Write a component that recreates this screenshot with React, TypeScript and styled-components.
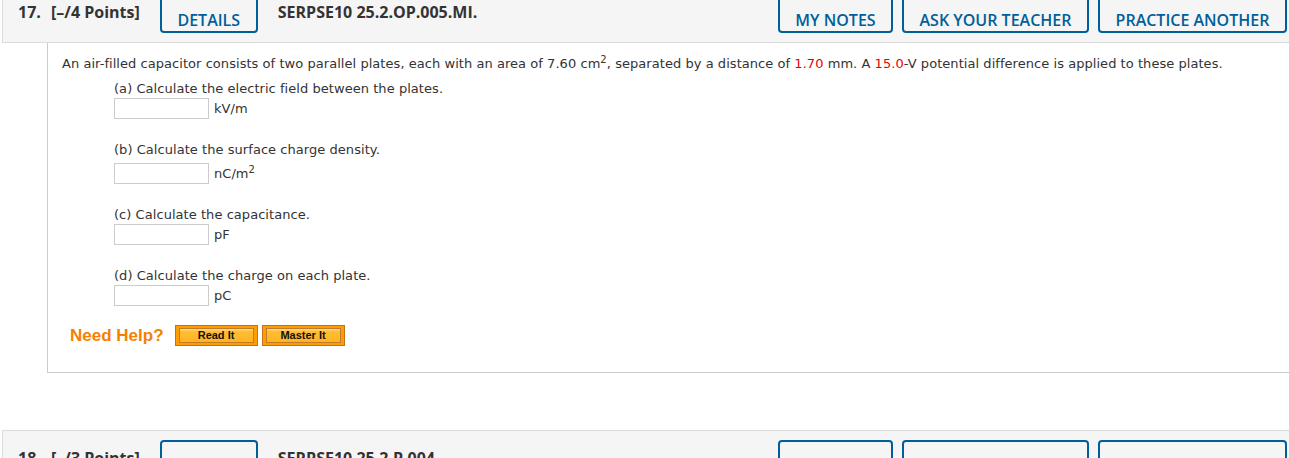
import React from "react";
import styled, { createGlobalStyle } from "styled-components";

const Global = createGlobalStyle`
  html, body {
    margin: 0;
    padding: 0;
    background: #ffffff;
    overflow: hidden;
  }
  body {
    font-family: "DejaVu Sans", Verdana, sans-serif;
  }
`;

const Page = styled.div`
  margin-top: -16px;
  padding-left: 2px;
  width: 1320px;
`;

const Question = styled.section`
  display: flex;
  flex-direction: column;
  & + & {
    margin-top: 57px;
  }
`;

const Header = styled.header`
  display: flex;
  align-items: flex-start;
  background: #f5f5f5;
  border: 1px solid #dcdcdc;
  border-right: none;
  padding: 9px 3px 9px 15px;
  width: 1269px;
  font-family: "Open Sans", "Liberation Sans", sans-serif;
`;

const HeaderText = styled.span`
  margin-top: 7px;
  font-size: 16px;
  line-height: 22px;
  font-weight: 700;
  color: #333333;
  white-space: nowrap;
`;

const Number = styled(HeaderText)`
  width: 33px;
`;

const Points = styled(HeaderText)`
  margin-right: 20px;
`;

const Code = styled(HeaderText)`
  margin-left: 20px;
`;

const Actions = styled.div`
  display: flex;
  gap: 9px;
  margin-left: auto;
`;

const TabButton = styled.button<{ $w: number }>`
  box-sizing: border-box;
  width: ${(p) => p.$w}px;
  height: 39px;
  padding: 12px 0 0;
  border: 2px solid #005f9b;
  border-radius: 4px;
  background: transparent;
  font-family: "Open Sans", "Liberation Sans", sans-serif;
  font-size: 16px;
  line-height: 22px;
  font-weight: 600;
  color: #005f9b;
  text-align: center;
  text-transform: uppercase;
  white-space: nowrap;
  cursor: pointer;
`;

const Body = styled.div`
  margin-left: 45px;
  border-left: 1px solid #cccccc;
  border-bottom: 1px solid #cccccc;
  padding: 13px 0 26px 14px;
  color: #333333;
  font-size: 13px;
  line-height: 16px;
  letter-spacing: 0.05px;
  display: flex;
  flex-direction: column;
`;

const Prompt = styled.p`
  margin: 0;
  white-space: nowrap;
`;

const Red = styled.span`
  color: #ee0000;
`;

const Sup = styled.sup`
  font-size: 10px;
  line-height: 0;
  vertical-align: 5px;
`;

const Parts = styled.div`
  display: flex;
  flex-direction: column;
  gap: 23px;
  margin: 9px 0 0 52px;
`;

const Part = styled.div`
  display: flex;
  flex-direction: column;
`;

const Label = styled.div`
  line-height: 16px;
`;

const AnswerRow = styled.div<{ $tall?: boolean }>`
  display: flex;
  align-items: center;
  gap: 5px;
  margin-top: ${(p) => (p.$tall ? "5px" : "1px")};
`;

const AnswerBox = styled.input`
  box-sizing: border-box;
  width: 95px;
  height: 21px;
  margin: 0;
  border: 1px solid #cccccc;
  background: #ffffff;
  padding: 0 3px;
  font: inherit;
`;

const Unit = styled.span`
  line-height: 16px;
`;

const HelpRow = styled.div`
  display: flex;
  align-items: center;
  margin: 19px 0 0 8px;
`;

const HelpTitle = styled.span`
  font-family: "Liberation Sans", Arial, sans-serif;
  font-weight: 700;
  font-size: 17px;
  letter-spacing: 0;
  color: #f77f00;
  margin-right: 11px;
`;

const HelpButton = styled.button`
  box-sizing: border-box;
  width: 83px;
  height: 21px;
  padding: 2px 3px;
  margin: 0 4px 0 0;
  border: 1px solid #c0731c;
  background: #ff9c00;
  cursor: pointer;
`;

const HelpFace = styled.span`
  display: block;
  box-sizing: border-box;
  height: 15px;
  border: 1px solid #c67a25;
  background: linear-gradient(#ffdc94 0, #ffbd33 20%, #ffb422 100%);
  font-family: "Liberation Sans", Arial, sans-serif;
  font-weight: 700;
  font-size: 11px;
  line-height: 13px;
  letter-spacing: 0;
  color: #111111;
  text-align: center;
`;

type Q = {
  n: string;
  points: string;
  code: string;
};

const QuestionHeader: React.FC<Q> = ({ n, points, code }) => (
  <Header>
    <Number>{n}</Number>
    <Points>{points}</Points>
    <TabButton $w={98}>Details</TabButton>
    <Code>{code}</Code>
    <Actions>
      <TabButton $w={115}>My Notes</TabButton>
      <TabButton $w={187}>Ask Your Teacher</TabButton>
      <TabButton $w={189}>Practice Another</TabButton>
    </Actions>
  </Header>
);

const parts: { label: string; unit: React.ReactNode; tall?: boolean }[] = [
  { label: "(a) Calculate the electric field between the plates.", unit: "kV/m" },
  {
    label: "(b) Calculate the surface charge density.",
    unit: (
      <>
        nC/m<Sup>2</Sup>
      </>
    ),
    tall: true,
  },
  { label: "(c) Calculate the capacitance.", unit: "pF" },
  { label: "(d) Calculate the charge on each plate.", unit: "pC" },
];

export default function App() {
  return (
    <>
      <Global />
      <Page>
        <Question>
          <QuestionHeader n="17." points="[–/4 Points]" code="SERPSE10 25.2.OP.005.MI." />
          <Body>
            <Prompt>
              An air-filled capacitor consists of two parallel plates, each with an area of 7.60 cm
              <Sup>2</Sup>, separated by a distance of <Red>1.70</Red> mm. A <Red>15.0</Red>-V
              potential difference is applied to these plates.
            </Prompt>
            <Parts>
              {parts.map((p) => (
                <Part key={p.label}>
                  <Label>{p.label}</Label>
                  <AnswerRow $tall={p.tall}>
                    <AnswerBox type="text" />
                    <Unit>{p.unit}</Unit>
                  </AnswerRow>
                </Part>
              ))}
            </Parts>
            <HelpRow>
              <HelpTitle>Need Help?</HelpTitle>
              <HelpButton>
                <HelpFace>Read It</HelpFace>
              </HelpButton>
              <HelpButton>
                <HelpFace>Master It</HelpFace>
              </HelpButton>
            </HelpRow>
          </Body>
        </Question>
        <Question>
          <QuestionHeader n="18." points="[–/3 Points]" code="SERPSE10 25.2.P.004." />
        </Question>
      </Page>
    </>
  );
}
